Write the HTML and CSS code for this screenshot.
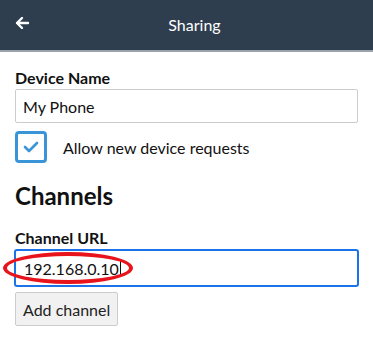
FILE: index.html
```html
<!DOCTYPE html>
<html lang="en">
<head>
  <meta charset="UTF-8" />
  <meta name="viewport" content="width=device-width, initial-scale=1.0" />
  <title>Sharing</title>
  <link rel="stylesheet" href="styles.css">
</head>
<body>
  <div class="topbar">
    <svg class="back" width="16" height="16" viewBox="0 0 16 16">
      <path d="M14 8H3M8 3L3 8l5 5" fill="none" stroke="#fff" stroke-width="2.4" stroke-linecap="round" stroke-linejoin="round"/>
    </svg>
    <div class="title">Sharing</div>
  </div>

  <div class="content">
    <label class="field-label">Device Name</label>
    <input class="text-input" type="text" value="My Phone" />

    <div class="check-row">
      <span class="checkbox">
        <svg width="16" height="12" viewBox="0 0 16 12">
          <path d="M2 6l4 4 8-8" fill="none" stroke="#3a95d8" stroke-width="2.6" stroke-linecap="round" stroke-linejoin="round"/>
        </svg>
      </span>
      <span class="check-text">Allow new device requests</span>
    </div>

    <h2>Channels</h2>

    <label class="field-label">Channel URL</label>
    <div class="url-wrap">
      <div class="text-input focused">192.168.0.10<span class="caret"></span></div>
      <div class="mark"></div>
    </div>

    <button class="add-btn">Add channel</button>
  </div>
</body>
</html>
```

FILE: styles.css
```css
body {
  margin: 0;
  font-family: Lato, 'Noto Sans', sans-serif;
  background: #fff;
  color: #111;
}
.topbar {
  height: 50px;
  background: #2e3e4f;
  border-bottom: 2px solid #9aa3ab;
  display: flex;
  align-items: center;
  position: relative;
}
.back {
  margin-left: 14px;
  margin-top: -4px;
}
.title {
  position: absolute;
  left: 0;
  right: 0;
  text-align: center;
  color: #fff;
  font-size: 16px;
  top: 15px;
  padding-left: 16px;
}
.content {
  padding: 16px 15px;
}
.field-label {
  display: block;
  font-weight: bold;
  font-size: 16px;
  line-height: 20px;
  margin-bottom: 1px;
}
.text-input {
  box-sizing: border-box;
  display: block;
  width: 343px;
  height: 34px;
  border: 1px solid #ccc;
  border-radius: 2px;
  padding: 0 7px;
  font-family: inherit;
  font-size: 16px;
  color: #111;
  outline: none;
}
.text-input.focused {
  display: flex;
  align-items: center;
  width: 345px;
  height: 38px;
  margin-left: -1px;
  border: 2px solid #1a73e8;
  border-radius: 3px;
  padding: 0 8px;
}
.caret {
  display: inline-block;
  width: 1px;
  height: 18px;
  background: #111;
  margin-left: 1px;
}
.check-row {
  display: flex;
  align-items: center;
  margin-top: 8px;
}
.checkbox {
  box-sizing: border-box;
  width: 32px;
  height: 32px;
  border: 3px solid #3a95d8;
  border-radius: 4px;
  display: flex;
  align-items: center;
  justify-content: center;
}
.check-text {
  margin-left: 16px;
  font-size: 16px;
}
h2 {
  font-size: 24px;
  margin: 18px 0 17px;
  line-height: 30px;
}
.url-wrap {
  position: relative;
}
.mark {
  position: absolute;
  left: -12px;
  top: 3px;
  width: 122px;
  height: 24px;
  border: 4px solid #e8141b;
  border-radius: 50%;
}
.add-btn {
  margin-top: 5px;
  height: 34px;
  padding: 0 7px;
  background: #f1f1f1;
  border: 1px solid #ccc;
  border-radius: 2px;
  font-family: inherit;
  font-size: 16px;
  color: #222;
}
```
